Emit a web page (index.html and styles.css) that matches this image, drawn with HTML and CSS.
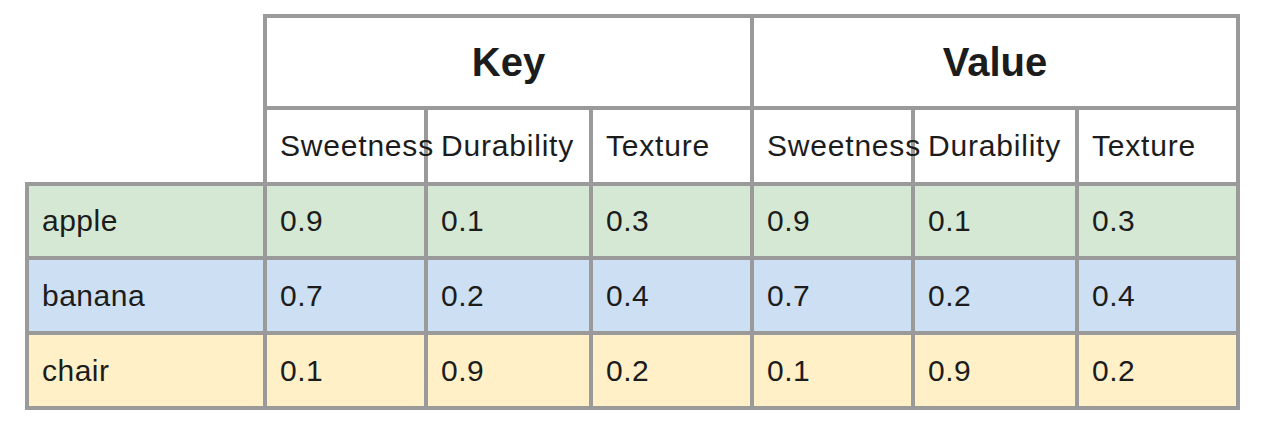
FILE: index.html
```html
<!DOCTYPE html>
<html lang="en">
<head>
<meta charset="utf-8">
<title>Key / Value table</title>
<link rel="stylesheet" href="styles.css">
</head>
<body>
<table class="kv">
  <colgroup>
    <col class="c-name">
    <col class="c-k1"><col class="c-k2"><col class="c-k3">
    <col class="c-v1"><col class="c-v2"><col class="c-v3">
  </colgroup>
  <thead>
    <tr class="group-row">
      <th class="corner" rowspan="2"></th>
      <th class="group" colspan="3">Key</th>
      <th class="group" colspan="3">Value</th>
    </tr>
    <tr class="sub-row">
      <th>Sweetness</th><th>Durability</th><th>Texture</th>
      <th>Sweetness</th><th>Durability</th><th>Texture</th>
    </tr>
  </thead>
  <tbody>
    <tr class="row green">
      <td>apple</td><td>0.9</td><td>0.1</td><td>0.3</td><td>0.9</td><td>0.1</td><td>0.3</td>
    </tr>
    <tr class="row blue">
      <td>banana</td><td>0.7</td><td>0.2</td><td>0.4</td><td>0.7</td><td>0.2</td><td>0.4</td>
    </tr>
    <tr class="row yellow">
      <td>chair</td><td>0.1</td><td>0.9</td><td>0.2</td><td>0.1</td><td>0.9</td><td>0.2</td>
    </tr>
  </tbody>
</table>
</body>
</html>
```
FILE: styles.css
```css
html, body {
  margin: 0;
  padding: 0;
  background: #ffffff;
}

body {
  padding: 14px 0 0 25px;
  font-family: "Liberation Sans", Arial, Helvetica, sans-serif;
  color: #1c1c1c;
}

.kv {
  border-collapse: collapse;
  table-layout: fixed;
  width: 1215px;
}

.c-name { width: 238px; }
.c-k1 { width: 161px; }
.c-k2 { width: 165px; }
.c-k3 { width: 161px; }
.c-v1 { width: 161px; }
.c-v2 { width: 164px; }
.c-v3 { width: 161px; }

.kv th,
.kv td {
  border: 4px solid #9a9a9a;
  padding: 0 0 0 13px;
  text-align: left;
  vertical-align: middle;
  white-space: nowrap;
  font-weight: normal;
  font-size: 30px;
  letter-spacing: 0.8px;
  box-sizing: border-box;
}

.kv td {
  letter-spacing: 0.5px;
}

.kv th.corner {
  border: none;
  background: transparent;
}

.kv th.group {
  text-align: center;
  padding: 0;
  font-weight: bold;
  font-size: 40px;
  letter-spacing: 0;
}

.group-row { height: 92px; }
.sub-row { height: 76px; }
.row { height: 75px; }
.row.green { height: 74px; }

.green td { background: #d5e8d4; }
.blue td { background: #cddff2; }
.yellow td { background: #fff0c8; }
```
